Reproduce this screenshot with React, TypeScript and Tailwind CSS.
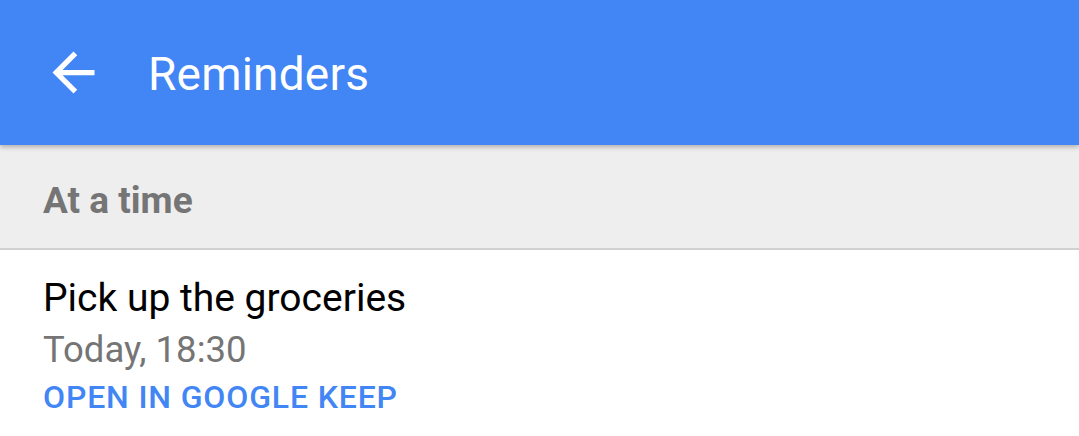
import React from "react";

export default function App() {
  return (
    <div className="w-[1079px] h-[436px] bg-white overflow-hidden" style={{ fontFamily: "Roboto, 'Noto Sans', sans-serif" }}>
      <div className="relative z-10 h-[145px] bg-[#4285F4] flex items-center shadow-[0_2px_5px_rgba(0,0,0,0.28)]">
        <div className="ml-[42px] w-[63px] h-[63px] flex items-center justify-center">
          <svg width="63" height="63" viewBox="0 0 24 24" fill="#ffffff">
            <path d="M20 11H7.83l5.59-5.59L12 4l-8 8 8 8 1.41-1.41L7.83 13H20v-2z" />
          </svg>
        </div>
        <div className="ml-[43px] mt-[3px] text-white text-[46px] leading-[46px] tracking-[0.2px]">Reminders</div>
      </div>
      <div className="h-[105px] bg-[#EEEEEE] border-b-[2px] border-[#d0d0d0] pl-[43px] pt-[37px]">
        <div className="text-[37px] leading-[37px] font-bold text-[#757575]">At a time</div>
      </div>
      <div className="pl-[43px] pt-[29px]">
        <div className="text-[39px] leading-[39px] text-black">Pick up the groceries</div>
        <div className="mt-[13px] text-[36.5px] leading-[38px] text-[#757575]">Today, 18:30</div>
        <div className="mt-[12px] text-[32px] leading-[32px] font-medium tracking-[0.85px] text-[#4285F4]">OPEN IN GOOGLE KEEP</div>
      </div>
    </div>
  );
}
